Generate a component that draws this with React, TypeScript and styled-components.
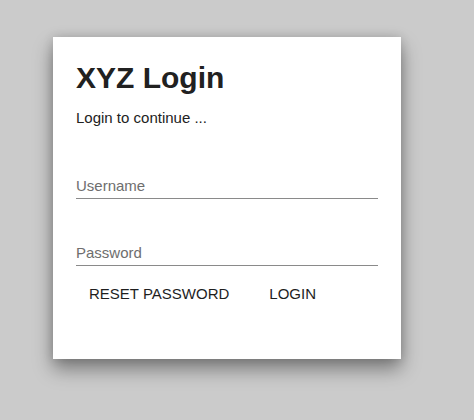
import styled, { createGlobalStyle } from "styled-components";

const GlobalStyle = createGlobalStyle`
  html, body {
    margin: 0;
    padding: 0;
    background-color: #cbcbcb;
    font-family: "Liberation Sans", Arial, sans-serif;
  }
`;

const Page = styled.div`
  height: 420px;
  padding: 37px 0 0 53px;
  box-sizing: border-box;
`;

const Card = styled.form`
  width: 348px;
  box-sizing: border-box;
  padding: 24px 23px 47px;
  background-color: #fff;
  box-shadow: 0 10px 18px rgba(0, 0, 0, 0.4), 0 0 10px rgba(0, 0, 0, 0.14);
  display: flex;
  flex-direction: column;
`;

const Title = styled.h1`
  margin: 0;
  color: #212121;
  font-size: 30px;
  font-weight: bold;
  line-height: 34px;
`;

const Subtitle = styled.p`
  margin: 14px 0 0;
  color: #222;
  font-size: 15px;
  line-height: 18px;
`;

const Field = styled.input<{ $gap: number }>`
  margin-top: ${(props) => props.$gap}px;
  height: 23px;
  box-sizing: border-box;
  padding: 0 0 4px;
  border: none;
  border-bottom: 1px solid #8a8a8a;
  outline: none;
  background: transparent;
  font-family: inherit;
  font-size: 15px;
  color: #222;
  &::placeholder {
    color: #6e6e6e;
  }
`;

const Actions = styled.div`
  display: flex;
  gap: 14px;
  margin-top: 10px;
`;

const FlatButton = styled.button`
  height: 36px;
  padding: 0 13px;
  border: none;
  background: transparent;
  color: #1e1e1e;
  font-family: inherit;
  font-size: 15px;
  line-height: 36px;
  text-transform: uppercase;
  cursor: pointer;
`;

function App() {
  return (
    <>
      <GlobalStyle />
      <Page>
        <Card onSubmit={(e) => e.preventDefault()}>
          <Title>XYZ Login</Title>
          <Subtitle>Login to continue ...</Subtitle>
          <Field $gap={49} type="text" placeholder="Username" />
          <Field $gap={44} type="password" placeholder="Password" />
          <Actions>
            <FlatButton type="button">Reset Password</FlatButton>
            <FlatButton type="submit">Login</FlatButton>
          </Actions>
        </Card>
      </Page>
    </>
  );
}

export default App;
